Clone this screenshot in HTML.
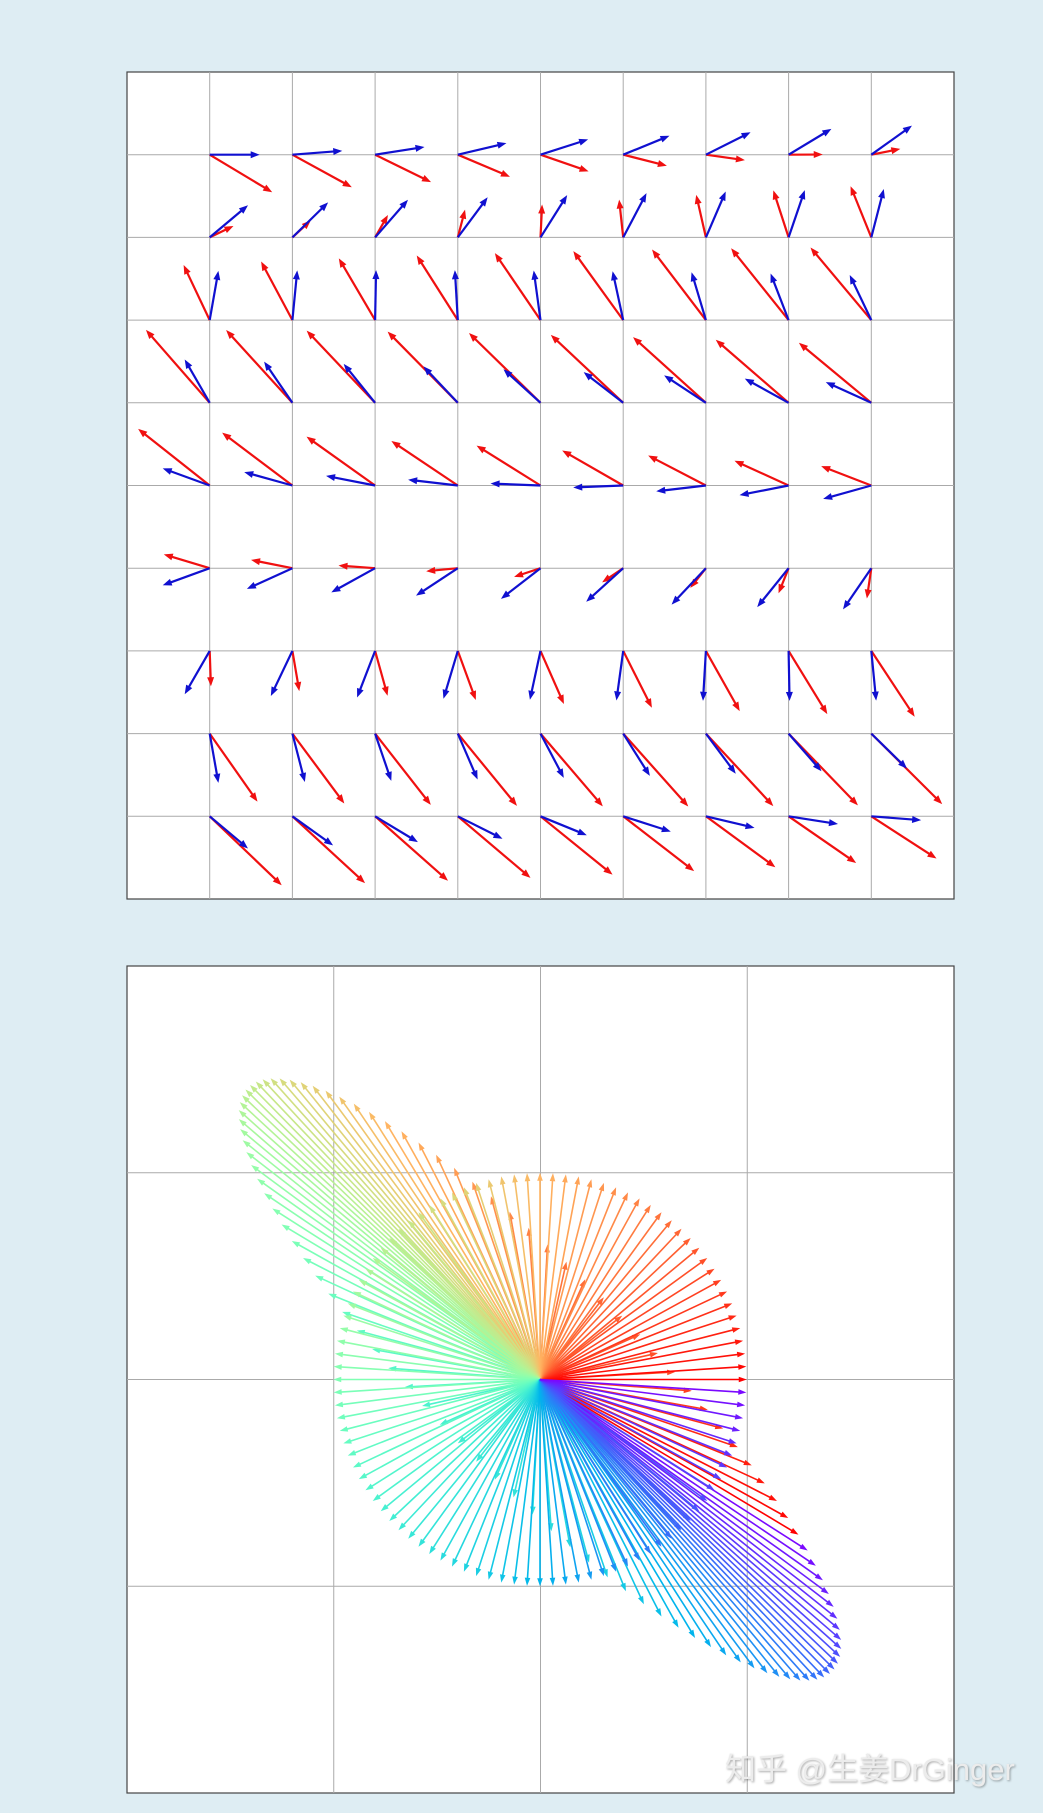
<!DOCTYPE html>
<html><head><meta charset="utf-8"><style>
html,body{margin:0;padding:0;background:#deedf3;width:1043px;height:1813px;overflow:hidden;position:relative}
svg{position:absolute;left:0;top:0}
.wm{position:absolute;left:725px;top:1744px;font:31px "Liberation Sans","Noto Sans CJK SC",sans-serif;color:#ececec;text-shadow:1px 1px 2px rgba(0,0,0,0.35);white-space:nowrap}
</style></head><body>
<svg id="s" width="1043" height="1813" xmlns="http://www.w3.org/2000/svg">
<rect x="127" y="72" width="827" height="827" fill="#fff" stroke="#444" stroke-width="1.2"/>
<rect x="127" y="966" width="827" height="827" fill="#fff" stroke="#444" stroke-width="1.2"/>
<g id="g1"></g><g id="g2"></g>
</svg>
<div class="wm">知乎 @生姜DrGinger</div>
<script>
var ns="http://www.w3.org/2000/svg",g1=document.getElementById('g1'),g2=document.getElementById('g2');
function line(g,x1,y1,x2,y2,c,w){var l=document.createElementNS(ns,'line');l.setAttribute('x1',x1);l.setAttribute('y1',y1);l.setAttribute('x2',x2);l.setAttribute('y2',y2);l.setAttribute('stroke',c);l.setAttribute('stroke-width',w);g.appendChild(l);}
function arrow(g,x,y,dx,dy,c,w,hl,hw){var L=Math.hypot(dx,dy);if(L<0.5)return;var ux=dx/L,uy=dy/L;var h=Math.min(hl,L);var bx=x+dx-ux*h,by=y+dy-uy*h;line(g,x,y,bx+ux*1,by+uy*1,c,w);var p=document.createElementNS(ns,'polygon');p.setAttribute('points',(x+dx)+','+(y+dy)+' '+(bx-uy*hw)+','+(by+ux*hw)+' '+(bx+uy*hw)+','+(by-ux*hw));p.setAttribute('fill',c);g.appendChild(p);}
for(var i=1;i<10;i++){var p=127+82.7*i;line(g1,p,72,p,899,'#aaa',1);line(g1,127,p-127+72,954,p-127+72,'#aaa',1);}
for(var i=1;i<4;i++){var p=127+206.75*i;line(g2,p,966,p,1793,'#aaa',1);var q=966+206.75*i;line(g2,127,q,954,q,'#aaa',1);}
var a=1.25,b=-0.75;
for(var k=0;k<81;k++){var t=2*Math.PI*k/81,c=Math.cos(t),s=Math.sin(t);var r=Math.floor(k/9),col=k%9;var x=127+82.7*(col+1),y=72+82.7*(r+1);var U=50;
arrow(g1,x,y,U*(a*c+b*s),-U*(b*c+a*s),'#f01010',2.2,9,3.5);
arrow(g1,x,y,U*c,-U*s,'#1010d0',2.2,9,3.5);}
function rb(v){var R=Math.min(1,Math.abs(2*v-0.5)),G=Math.sin(Math.PI*v),B=Math.cos(Math.PI*v/2);return 'rgb('+Math.round(R*255)+','+Math.round(Math.max(0,G)*255)+','+Math.round(Math.max(0,B)*255)+')';}
var cx=540,cy=1379.5,U2=206.75,N=100;
for(var k=0;k<N;k++){var t=2*Math.PI*k/N,c=Math.cos(t),s=Math.sin(t);var col=rb(1-k/N);
arrow(g2,cx,cy,U2*(a*c+b*s),-U2*(b*c+a*s),col,1.6,8,2.8);}
for(var k=0;k<N;k++){var t=2*Math.PI*k/N,c=Math.cos(t),s=Math.sin(t);var col=rb(1-k/N);
arrow(g2,cx,cy,U2*c,-U2*s,col,1.6,8,2.8);}
</script>
</body></html>
